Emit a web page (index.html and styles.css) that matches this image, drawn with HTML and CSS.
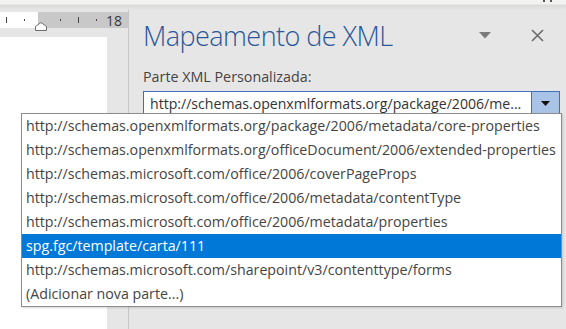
FILE: index.html
```html
<!DOCTYPE html>
<html lang="pt">
<head>
<meta charset="utf-8">
<title>Mapeamento de XML</title>
<link rel="stylesheet" href="styles.css">
</head>
<body>
<div class="app">
  <div class="top"><span class="corner-icon"></span></div>
  <div class="main">
    <div class="doc">
      <div class="ruler">
        <span class="cell"><i class="tick"></i></span>
        <span class="cell"><i class="dot"></i></span>
        <span class="cell"></span>
        <span class="cell"><i class="dot"></i></span>
        <span class="cell"><i class="tick"></i></span>
        <span class="cell"><i class="dot"></i></span>
        <span class="cell num">18</span>
        <svg class="indent" width="12" height="9" viewBox="0 0 12 9"><path d="M0.5 8.5 V4.5 L6 0.5 L11.5 4.5 V8.5 Z" fill="#fff" stroke="#6e6e6e"/></svg>
      </div>
      <div class="page"></div>
    </div>
    <div class="divider"></div>
    <div class="pane">
      <div class="pane-head">
        <h1 class="title">Mapeamento de XML</h1>
        <svg class="menu-arrow" width="12" height="7" viewBox="0 0 12 7"><path d="M0 0 H12 L6 6.5 Z" fill="#7a7a7a"/></svg>
        <svg class="close" width="13" height="13" viewBox="0 0 13 13"><path d="M1 1 L12 12 M12 1 L1 12" stroke="#6a6a6a" stroke-width="1.6"/></svg>
      </div>
      <div class="label">Parte XML Personalizada:</div>
      <div class="combo">
        <span class="combo-text">http://schemas.openxmlformats.org/package/2006/me...</span>
        <span class="combo-btn"><svg width="9" height="5" viewBox="0 0 9 5"><path d="M0 0 H9 L4.5 5 Z" fill="#111"/></svg></span>
      </div>
    </div>
  </div>
  <ul class="list">
    <li>http://schemas.openxmlformats.org/package/2006/metadata/core-properties</li>
    <li>http://schemas.openxmlformats.org/officeDocument/2006/extended-properties</li>
    <li>http://schemas.microsoft.com/office/2006/coverPageProps</li>
    <li>http://schemas.microsoft.com/office/2006/metadata/contentType</li>
    <li>http://schemas.microsoft.com/office/2006/metadata/properties</li>
    <li class="sel">spg.fgc/template/carta/111</li>
    <li>http://schemas.microsoft.com/sharepoint/v3/contenttype/forms</li>
    <li>(Adicionar nova parte...)</li>
  </ul>
</div>
</body>
</html>
```

FILE: styles.css
```css
html, body {
  margin: 0;
  padding: 0;
}
body {
  width: 566px;
  height: 329px;
  overflow: hidden;
  background: #e6e6e6;
  font-family: "Open Sans", "Noto Sans", "Liberation Sans", sans-serif;
}
.app {
  position: relative;
  width: 566px;
  height: 329px;
  display: flex;
  flex-direction: column;
}
.top {
  position: relative;
  height: 10px;
  flex: none;
  background: linear-gradient(#f3f2f1 0, #f3f2f1 4px, #dadada 5px, #e6e6e6 10px);
}
.corner-icon {
  position: absolute;
  left: 543px;
  top: 0;
  width: 10px;
  height: 2px;
  background: linear-gradient(90deg, #555 0 2px, transparent 2px 7px, #555 7px 9px, transparent 9px);
}
.main {
  flex: 1;
  display: flex;
}
.doc {
  width: 128px;
  flex: none;
  padding-top: 2px;
  display: flex;
  flex-direction: column;
}
.ruler {
  position: relative;
  height: 16px;
  flex: none;
  display: flex;
  margin-left: -3px;
  background: linear-gradient(90deg, #fff 0, #fff 41px, #c8c8c8 41px);
  color: #3a3a3a;
}
.cell {
  width: 18px;
  flex: none;
  display: flex;
  align-items: center;
  justify-content: center;
}
.tick {
  width: 1px;
  height: 6px;
  background: #444;
}
.dot {
  width: 1px;
  height: 2px;
  background: #444;
}
.num {
  font-size: 14px;
  width: 22px;
  justify-content: flex-start;
  margin-left: 1px;
}
.indent {
  position: absolute;
  left: 38px;
  top: 10px;
}
.page {
  margin-top: 9px;
  width: 107px;
  flex: 1;
  background: #fff;
}
.divider {
  width: 1px;
  flex: none;
  background: #c6c6c6;
}
.pane {
  flex: 1;
  display: flex;
  flex-direction: column;
  padding-left: 14px;
}
.pane-head {
  display: flex;
  align-items: center;
  margin-top: 9px;
  height: 34px;
}
.title {
  margin: 0;
  font-weight: 300;
  font-size: 27px;
  line-height: 34px;
  color: #2b579a;
  flex: 1;
  letter-spacing: -0.55px;
}
.menu-arrow {
  margin-right: 40px;
  margin-top: -2px;
}
.close {
  margin-right: 22px;
  margin-top: -2px;
}
.label {
  margin-top: 14px;
  font-size: 14.3px;
  line-height: 20px;
  color: #444;
}
.combo {
  margin-top: 4px;
  width: 417px;
  height: 25px;
  box-sizing: border-box;
  border: 1px solid #3f6fbf;
  background: #fff;
  display: flex;
  align-items: center;
}
.combo-text {
  flex: 1;
  padding-left: 6px;
  font-size: 14.1px;
  color: #333;
  white-space: nowrap;
  overflow: hidden;
}
.combo-btn {
  width: 28px;
  height: 23px;
  box-sizing: border-box;
  border-left: 1px solid #3f6fbf;
  background: #a9c3e7;
  display: flex;
  align-items: center;
  justify-content: center;
}
.list {
  position: absolute;
  left: 21px;
  top: 113px;
  width: 541px;
  box-sizing: border-box;
  margin: 0;
  padding: 0;
  list-style: none;
  background: #fff;
  border: 1px solid #8c8c8c;
  box-shadow: 1px 1px 2px rgba(0,0,0,0.15);
}
.list li {
  height: 24px;
  line-height: 24px;
  padding-left: 4px;
  font-size: 14.22px;
  color: #444;
  white-space: nowrap;
}
.list li.sel {
  background: #0078d7;
  color: #fff;
}
```
